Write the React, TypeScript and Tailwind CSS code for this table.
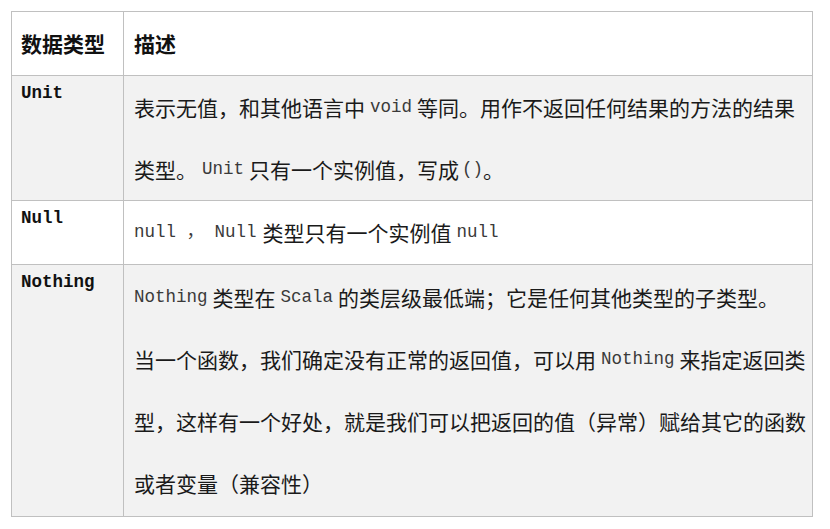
const cjk = "font-['Microsoft_YaHei','Noto_Sans_CJK_SC',sans-serif]";
const mono = "font-['Liberation_Mono','Noto_Sans_CJK_SC',monospace] text-[17.5px] leading-none text-[#3a3a3a] align-[4px]";

function Code({ children }: { children: React.ReactNode }) {
  return <span className={`${mono} mx-[5px]`}>{children}</span>;
}

function Name({ children }: { children: React.ReactNode }) {
  return (
    <td className="w-[112px] align-top border border-[#c0c0c0] pl-[9px] pt-[6px] font-['Liberation_Mono',monospace] font-bold text-[17.5px] leading-[22px] text-[#111]">
      {children}
    </td>
  );
}

function Desc({ children }: { children: React.ReactNode }) {
  return (
    <td className={`align-top border border-[#c0c0c0] pl-[10px] pr-1 text-[21px] leading-[62px] text-[#1a1a1a] whitespace-nowrap ${cjk}`}>
      {children}
    </td>
  );
}

export default function App() {
  return (
    <div className="w-[830px] h-[529px] bg-white pt-[11px] pl-[11px]">
      <table className="w-[802px] border-collapse table-fixed">
        <colgroup>
          <col className="w-[112px]" />
          <col />
        </colgroup>
        <thead>
          <tr className="h-[64px] bg-white">
            <th className={`border border-[#c0c0c0] pl-[9px] text-left font-bold text-[21px] text-[#111] ${cjk}`}>数据类型</th>
            <th className={`border border-[#c0c0c0] pl-[10px] text-left font-bold text-[21px] text-[#111] ${cjk}`}>描述</th>
          </tr>
        </thead>
        <tbody>
          <tr className="bg-[#f2f2f2]">
            <Name>Unit</Name>
            <Desc>
              <div>
                表示无值，和其他语言中<Code>void</Code>等同。用作不返回任何结果的方法的结果
              </div>
              <div>
                类型。<Code>Unit</Code>只有一个实例值，写成<span className={`${mono} ml-[3px]`}>()</span>。
              </div>
            </Desc>
          </tr>
          <tr className="bg-white">
            <Name>Null</Name>
            <Desc>
              <div className="h-[63px]">
                <span className={`${mono} mr-[6px]`}>null ， Null</span>
                类型只有一个实例值<Code>null</Code>
              </div>
            </Desc>
          </tr>
          <tr className="bg-[#f2f2f2]">
            <Name>Nothing</Name>
            <Desc>
              <div className="pt-[1px]">
                <span className={`${mono} mr-[5px]`}>Nothing</span>
                类型在<Code>Scala</Code>的类层级最低端；它是任何其他类型的子类型。
              </div>
              <div>
                当一个函数，我们确定没有正常的返回值，可以用<Code>Nothing</Code>来指定返回类
              </div>
              <div>型，这样有一个好处，就是我们可以把返回的值（异常）赋给其它的函数</div>
              <div className="pb-[2px]">或者变量（兼容性）</div>
            </Desc>
          </tr>
        </tbody>
      </table>
    </div>
  );
}
